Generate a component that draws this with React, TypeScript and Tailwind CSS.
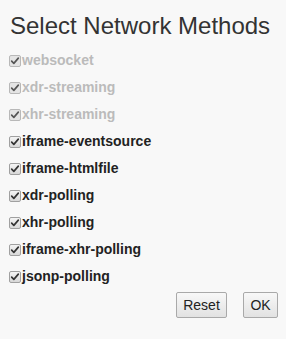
import React, { useState } from 'react';

const methods = [
  { name: 'websocket', disabled: true },
  { name: 'xdr-streaming', disabled: true },
  { name: 'xhr-streaming', disabled: true },
  { name: 'iframe-eventsource', disabled: false },
  { name: 'iframe-htmlfile', disabled: false },
  { name: 'xdr-polling', disabled: false },
  { name: 'xhr-polling', disabled: false },
  { name: 'iframe-xhr-polling', disabled: false },
  { name: 'jsonp-polling', disabled: false },
];

function Check({ disabled }: { disabled: boolean }) {
  return (
    <span
      className={
        'flex items-center justify-center w-[12px] h-[12px] rounded-[2px] border mr-[1px] ' +
        (disabled
          ? 'border-[#b8b8b8] bg-[#e4e4e4]'
          : 'border-[#a0a0a0] bg-gradient-to-b from-[#f4f4f4] to-[#d8d8d8]')
      }
    >
      <svg viewBox="0 0 12 12" className="w-[10px] h-[10px]">
        <path
          d="M2 6.2 L4.6 8.8 L10 2.6"
          fill="none"
          stroke={disabled ? '#555' : '#333'}
          strokeWidth="2"
          strokeLinecap="round"
          strokeLinejoin="round"
        />
      </svg>
    </span>
  );
}

export default function App() {
  const [checked] = useState(methods.map(() => true));

  return (
    <div className="w-[286px] h-[339px] bg-[#f8f8f8] font-['Liberation_Sans',Arial,sans-serif] text-[#333] px-[9px] pt-[12px]">
      {/* Title */}
      <h1 className="text-[24px] leading-[28px] ml-[1px] mb-[7px] whitespace-nowrap">Select Network Methods</h1>

      {/* Method list */}
      <div className="flex flex-col">
        {methods.map((m, i) => (
          <label
            key={m.name}
            className={
              'flex items-center h-[27px] text-[14px] font-bold ' +
              (m.disabled ? 'text-[#bbb]' : 'text-[#222]')
            }
          >
            {checked[i] && <Check disabled={m.disabled} />}
            <span>{m.name}</span>
          </label>
        ))}
      </div>

      {/* Actions */}
      <div className="flex justify-end gap-[16px] mt-[2px] mr-[-1px]">
        <button className="h-[26px] w-[51px] text-[14px] text-[#222] border border-[#a9a9a9] rounded-[2px] bg-gradient-to-b from-[#f8f8f8] to-[#e2e2e2]">
          Reset
        </button>
        <button className="h-[26px] w-[35px] text-[14px] text-[#222] border border-[#a9a9a9] rounded-[2px] bg-gradient-to-b from-[#f8f8f8] to-[#e2e2e2]">
          OK
        </button>
      </div>
    </div>
  );
}
